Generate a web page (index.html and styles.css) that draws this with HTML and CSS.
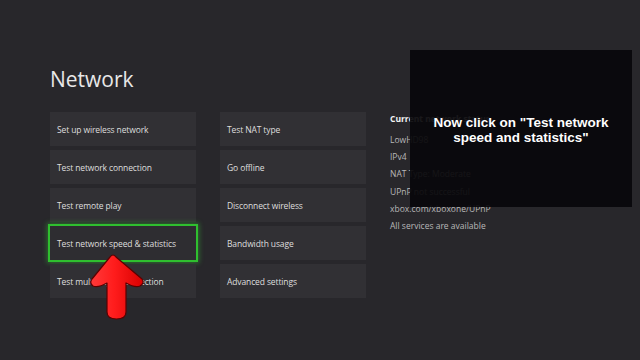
FILE: index.html
```html
<!DOCTYPE html>
<html>
<head>
<meta charset="utf-8">
<link rel="stylesheet" href="styles.css">
</head>
<body>
<div class="screen">
  <h1 class="title">Network</h1>
  <div class="content">
    <div class="col">
      <div class="tile">Set up wireless network</div>
      <div class="tile">Test network connection</div>
      <div class="tile">Test remote play</div>
      <div class="tile selected">Test network speed &amp; statistics</div>
      <div class="tile">Test multiplayer connection</div>
    </div>
    <div class="col">
      <div class="tile">Test NAT type</div>
      <div class="tile">Go offline</div>
      <div class="tile">Disconnect wireless</div>
      <div class="tile">Bandwidth usage</div>
      <div class="tile">Advanced settings</div>
    </div>
    <div class="status">
      <div class="status-head">Current network status</div>
      <div class="status-line">LowHD98</div>
      <div class="status-line">IPv4</div>
      <div class="status-line">NAT Type: Moderate</div>
      <div class="status-line">UPnP not successful</div>
      <div class="status-line">xbox.com/xboxone/UPnP</div>
      <div class="status-line">All services are available</div>
    </div>
  </div>
  <div class="overlay">
    <p class="overlay-text">Now click on "Test network<br>speed and statistics"</p>
  </div>
  <svg class="arrow" width="66" height="74" viewBox="0 0 66 74">
    <defs>
      <linearGradient id="rg" x1="0" y1="0" x2="1" y2="0">
        <stop offset="0" stop-color="#ff3a3a"/>
        <stop offset="0.45" stop-color="#ff1c1c"/>
        <stop offset="1" stop-color="#d80000"/>
      </linearGradient>
    </defs>
    <path d="M25 7 Q28 3 31 7 L57 29 Q60 33 55 36 Q50 38 41 33 L41 62 Q41 69 31.5 69 Q22 69 22 62 L22 33 Q13 38 8 36 Q4 33 7 29 Z" fill="url(#rg)" stroke="#5a0000" stroke-width="1.2" stroke-linejoin="round"/>
  </svg>
</div>
</body>
</html>
```
FILE: styles.css
```css
html, body {
  margin: 0;
  padding: 0;
}
body {
  background: #28272b;
  width: 640px;
  height: 360px;
  overflow: hidden;
  font-family: "Open Sans", "Noto Sans", sans-serif;
}
.screen {
  position: relative;
  width: 640px;
  height: 360px;
  padding-left: 50px;
  box-sizing: border-box;
}
.title {
  margin: 0;
  padding-top: 67px;
  font-size: 21px;
  line-height: 24px;
  font-weight: 400;
  color: #e8e8e8;
}
.content {
  display: flex;
  gap: 24px;
  margin-top: 21px;
}
.col {
  display: flex;
  flex-direction: column;
  gap: 4px;
  width: 146px;
}
.tile {
  height: 34px;
  line-height: 35px;
  background: #313034;
  color: #dedede;
  font-size: 8.5px;
  letter-spacing: -0.12px;
  padding-left: 7px;
  white-space: nowrap;
}
.tile.selected {
  box-shadow: 0 0 0 2px #2fbf2f, 0 0 5px 3px rgba(60, 200, 60, 0.45);
  background: #2e2d31;
}
.status {
  padding-top: 1px;
  font-size: 8.5px;
  color: #b8b8b8;
}
.status-head {
  color: #f2f2f2;
  font-weight: 700;
  line-height: 12px;
  margin-bottom: 6px;
}
.status-line {
  line-height: 17.2px;
}
.overlay {
  position: absolute;
  left: 410px;
  top: 50px;
  width: 222px;
  height: 157px;
  background: rgba(9, 8, 11, 0.93);
  display: flex;
  align-items: center;
  justify-content: center;
}
.overlay-text {
  margin: 0;
  padding-top: 2px;
  text-align: center;
  color: #ffffff;
  font-family: "Liberation Sans", Arial, sans-serif;
  font-weight: 700;
  font-size: 13.5px;
  line-height: 15px;
}
.arrow {
  position: absolute;
  left: 85px;
  top: 250px;
}
```
